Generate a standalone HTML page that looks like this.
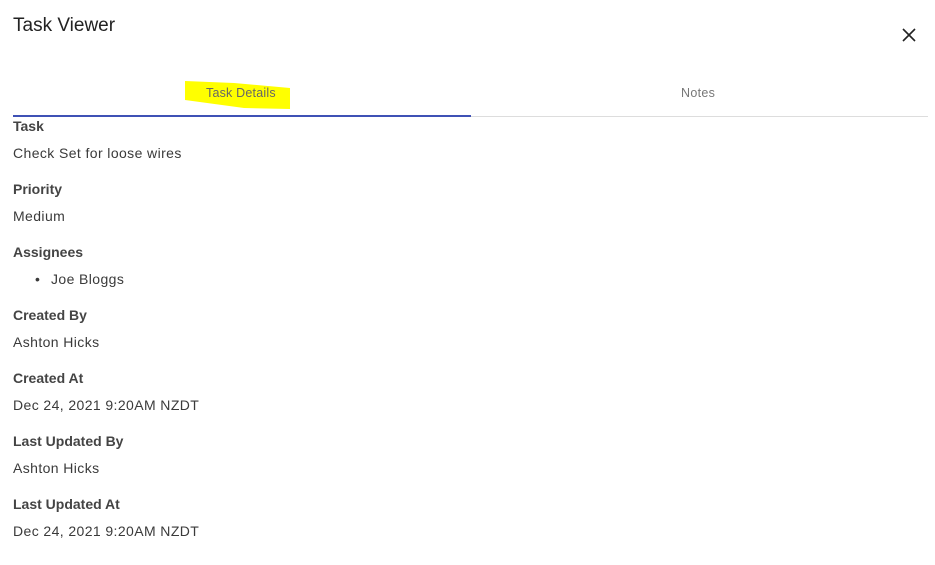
<!DOCTYPE html>
<html><head><style>
body{margin:0;width:935px;height:565px;background:#fff;font-family:"Liberation Sans",sans-serif;color:#333;position:relative;overflow:hidden}
.a{position:absolute;white-space:nowrap}
.l{font-size:14px;font-weight:bold;color:#444;letter-spacing:0px}
.v{font-size:14px;color:#3a3a3a;letter-spacing:0.4px}
</style></head><body>
<div class="a" style="left:13px;top:15px;font-size:19px;color:#222">Task Viewer</div>
<svg class="a" style="left:902px;top:28px" width="14" height="14"><path d="M1 1L13 13M13 1L1 13" stroke="#222" stroke-width="1.6"/></svg>
<svg class="a" style="left:184px;top:80px" width="108" height="30"><polygon points="1,1 50,3 106,8 106,29 60,28 1,20" fill="#ffff00"/></svg>
<div class="a" style="left:206px;top:86px;font-size:12.5px;color:#666;letter-spacing:0.2px">Task Details</div>
<div class="a" style="left:681px;top:86px;font-size:12.5px;color:#777;letter-spacing:0.3px">Notes</div>
<div class="a" style="left:13px;top:116px;width:915px;height:1px;background:#ddd"></div>
<div class="a" style="left:13px;top:115px;width:458px;height:2px;background:#3f51b5"></div>
<div class="a l" style="left:13px;top:118px">Task</div>
<div class="a v" style="left:13px;top:145px">Check Set for loose wires</div>
<div class="a l" style="left:13px;top:181px">Priority</div>
<div class="a v" style="left:13px;top:208px">Medium</div>
<div class="a l" style="left:13px;top:244px">Assignees</div>
<div class="a v" style="left:35px;top:271px">•</div>
<div class="a v" style="left:51px;top:271px">Joe Bloggs</div>
<div class="a l" style="left:13px;top:307px">Created By</div>
<div class="a v" style="left:13px;top:334px">Ashton Hicks</div>
<div class="a l" style="left:13px;top:370px">Created At</div>
<div class="a v" style="left:13px;top:397px">Dec 24, 2021 9:20AM NZDT</div>
<div class="a l" style="left:13px;top:433px">Last Updated By</div>
<div class="a v" style="left:13px;top:460px">Ashton Hicks</div>
<div class="a l" style="left:13px;top:496px">Last Updated At</div>
<div class="a v" style="left:13px;top:523px">Dec 24, 2021 9:20AM NZDT</div>
</body></html>
